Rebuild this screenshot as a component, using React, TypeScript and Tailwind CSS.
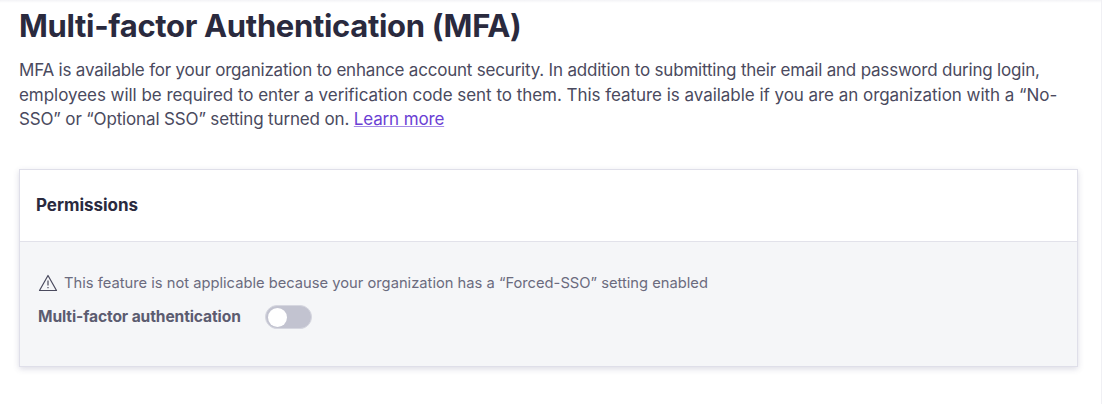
export default function App() {
  return (
    <div className="h-[404px] w-[1102px] overflow-hidden bg-white font-['Inter',sans-serif]">
      <div className="h-full border-r border-[#f0f0f4] bg-gradient-to-b from-[#f3f3f6] from-0% to-white to-[3px] pl-[19px] pr-[23px] pt-[8px]">
        <h1 className="text-[31px] leading-[36px] font-bold tracking-[-0.33px] text-[#2a2a3e]">
          Multi-factor Authentication (MFA)
        </h1>
        <p className="mt-[14px] text-[17px] leading-[24.5px] text-[#4a4a5e]">
          <span className="block tracking-[-0.2px]">
            MFA is available for your organization to enhance account security. In addition to submitting their email and password during login,
          </span>
          <span className="block tracking-[-0.04px]">
            employees will be required to enter a verification code sent to them. This feature is available if you are an organization with a “No-
          </span>
          <span className="block tracking-[-0.15px]">
            SSO” or “Optional SSO” setting turned on.{' '}
            <a href="#" className="text-[#6b3fd4] underline decoration-[#a58ce6]">Learn more</a>
          </span>
        </p>

        <div className="mt-[37.5px] border border-[#dfdfe9] bg-white shadow-[0_2px_6px_rgba(60,60,110,0.18)]">
          <div className="flex h-[72px] items-center border-b border-[#e2e2ea] px-[16px]">
            <h2 className="text-[17px] font-bold tracking-[-0.03px] text-[#2a2a3e]">Permissions</h2>
          </div>
          <div className="h-[124px] bg-[#f5f6f8] px-[18px] pt-[31px]">
            <div className="flex items-center gap-[6px]">
              <svg viewBox="0 0 20 18" className="h-[18px] w-[20px] text-[#4a4a5e]" fill="none" stroke="currentColor" strokeWidth="1.2">
                <path d="M10 1.5 18.5 16.5H1.5Z" strokeLinejoin="round" />
                <path d="M10 6.5V11.5M10 13V14.2" />
              </svg>
              <span className="text-[14.72px] leading-[20px] text-[#6b6b7e]">
                This feature is not applicable because your organization has a “Forced-SSO” setting enabled
              </span>
            </div>
            <div className="mt-[12px] flex items-center gap-[24px]">
              <span className="text-[15.6px] leading-[24px] font-bold tracking-[-0.12px] text-[#5c5c70]">Multi-factor authentication</span>
              <div className="flex h-[24px] w-[47px] items-center rounded-full border border-[#d6d7e0] bg-[#c2c3d0] pl-[2px]">
                <div className="h-[19px] w-[19px] rounded-full bg-white" />
              </div>
            </div>
          </div>
        </div>
      </div>
    </div>
  );
}
